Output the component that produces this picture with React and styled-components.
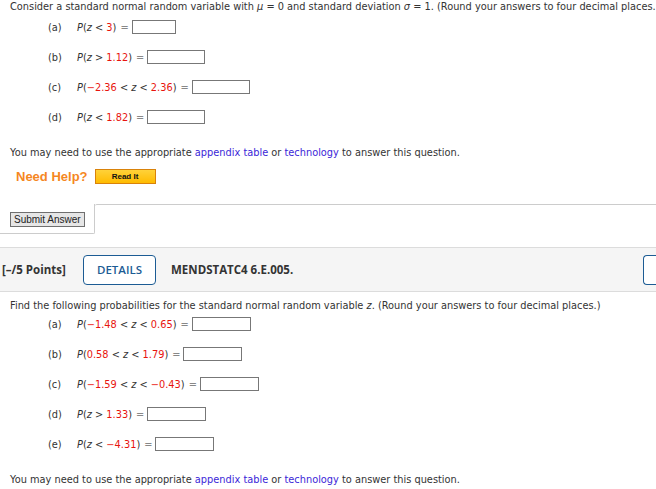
import React from "react";
import styled, { createGlobalStyle } from "styled-components";

const Global = createGlobalStyle`
  html, body { margin: 0; padding: 0; background: #fff; }
  body { font-family: Verdana, "DejaVu Sans", sans-serif; font-size: 9.8px; color: #333; overflow: hidden; }
`;

const Page = styled.div`
  width: 656px;
  height: 489px;
  overflow: hidden;
`;

const Question = styled.div`
  padding: 0 0 0 10px;
`;

const Intro = styled.p`
  margin: 0;
  padding-top: ${p => p.$top || 0}px;
  line-height: 14px;
  white-space: nowrap;
`;

const Parts = styled.div`
  display: flex;
  flex-direction: column;
  gap: 14px;
  padding: ${p => p.$top || 6}px 0 0 38px;
`;

const PartRow = styled.div`
  display: flex;
  align-items: center;
  height: 16px;
`;

const PartLabel = styled.span`
  width: 29px;
  flex: none;
`;

const Expr = styled.span`
  white-space: nowrap;
`;

const I = styled.i`
  font-style: italic;
`;

const Num = styled.span`
  color: #e8140e;
`;

const Eq = styled.span`
  color: #888;
  margin: 0 3px 0 4px;
`;

const AnswerBox = styled.span`
  display: inline-block;
  width: ${p => p.$w || 56}px;
  height: 12px;
  border: 1px solid #777;
  background: #fff;
`;

const Link = styled.a`
  color: #3b1fd8;
  text-decoration: none;
`;

const HelpRow = styled.div`
  display: flex;
  align-items: center;
  gap: 7px;
  padding: 9px 0 0 16px;
`;

const NeedHelp = styled.span`
  font-family: "Liberation Sans", Arial, sans-serif;
  font-weight: bold;
  font-size: 13px;
  color: #f5871f;
`;

const ReadIt = styled.button`
  width: 61px;
  height: 15px;
  padding: 0;
  border: 1px solid #d9820a;
  background: linear-gradient(#ffd23a, #ffbb00);
  font-family: "Liberation Sans", Arial, sans-serif;
  font-weight: bold;
  font-size: 8px;
  color: #111;
`;

const SubmitStrip = styled.div`
  display: flex;
  margin-top: 20px;
`;

const SubmitCell = styled.div`
  width: 95px;
  height: 30px;
  box-sizing: border-box;
  padding: 8px 0 0 10px;
  border-right: 1px solid #ccc;
  border-bottom: 1px solid #ccc;
  border-bottom-right-radius: 2px;
`;

const SubmitFiller = styled.div`
  flex: 1;
  border-top: 1px solid #ccc;
  border-top-left-radius: 2px;
`;

const SubmitBtn = styled.button`
  height: 15px;
  padding: 0 3px;
  border: 1px solid #6f6f6f;
  background: #e6e6e6;
  font-family: "Liberation Sans", Arial, sans-serif;
  font-size: 10px;
  color: #222;
  line-height: 13px;
`;

const Header = styled.div`
  display: flex;
  align-items: center;
  margin-top: 13px;
  height: 43px;
  background: #f5f5f5;
  border-top: 1px solid #dcdcdc;
  border-bottom: 1px solid #dcdcdc;
  font-family: "Open Sans", sans-serif;
  color: #333;
`;

const Points = styled.span`
  font-weight: 700;
  font-size: 11.5px;
  margin-left: 2px;
  width: 81px;
`;

const DetailsBtn = styled.button`
  width: 73px;
  height: 30px;
  border: 1px solid #1c5c94;
  border-radius: 4px;
  background: #fff;
  color: #1c5c94;
  font-family: "Open Sans", sans-serif;
  font-size: 11.5px;
  font-weight: 600;
  padding: 0;
`;

const Code = styled.span`
  font-weight: 700;
  font-size: 11.5px;
  margin-left: 15px;
  flex: 1;
`;

const EdgeBtn = styled.span`
  width: 20px;
  height: 28px;
  border: 1px solid #1c5c94;
  border-right: none;
  border-radius: 4px 0 0 4px;
  background: #fff;
  flex: none;
  margin-right: -8px;
`;

const Pz = ({ children }) => (
  <>
    <I>P</I>({children})
  </>
);

const Part = ({ label, expr, w }) => (
  <PartRow>
    <PartLabel>({label})</PartLabel>
    <Expr>{expr}</Expr>
    <Eq>=</Eq>
    <AnswerBox $w={w} />
  </PartRow>
);

const Lt = () => <> &lt; </>;
const Gt = () => <> &gt; </>;

export default function App() {
  return (
    <Page>
      <Global />
      <Question>
        <Intro $top={0}>
          Consider a standard normal random variable with <I>μ</I> = 0 and standard deviation <I>σ</I> = 1. (Round your answers to four decimal places.)
        </Intro>
        <Parts $top={5}>
          <Part label="a" w={42} expr={<Pz><I>z</I><Lt /><Num>3</Num></Pz>} />
          <Part label="b" w={56} expr={<Pz><I>z</I><Gt /><Num>1.12</Num></Pz>} />
          <Part label="c" w={56} expr={<Pz><Num>−2.36</Num><Lt /><I>z</I><Lt /><Num>2.36</Num></Pz>} />
          <Part label="d" w={56} expr={<Pz><I>z</I><Lt /><Num>1.82</Num></Pz>} />
        </Parts>
        <Intro $top={21}>
          You may need to use the appropriate <Link>appendix table</Link> or <Link>technology</Link> to answer this question.
        </Intro>
      </Question>
      <HelpRow>
        <NeedHelp>Need Help?</NeedHelp>
        <ReadIt>Read It</ReadIt>
      </HelpRow>
      <SubmitStrip>
        <SubmitCell>
          <SubmitBtn>Submit Answer</SubmitBtn>
        </SubmitCell>
        <SubmitFiller />
      </SubmitStrip>
      <Header>
        <Points>[–/5 Points]</Points>
        <DetailsBtn>DETAILS</DetailsBtn>
        <Code>MENDSTATC4 6.E.005.</Code>
        <EdgeBtn />
      </Header>
      <Question>
        <Intro $top={7}>
          Find the following probabilities for the standard normal random variable <I>z</I>. (Round your answers to four decimal places.)
        </Intro>
        <Parts $top={3}>
          <Part label="a" w={57} expr={<Pz><Num>−1.48</Num><Lt /><I>z</I><Lt /><Num>0.65</Num></Pz>} />
          <Part label="b" w={57} expr={<Pz><Num>0.58</Num><Lt /><I>z</I><Lt /><Num>1.79</Num></Pz>} />
          <Part label="c" w={57} expr={<Pz><Num>−1.59</Num><Lt /><I>z</I><Lt /><Num>−0.43</Num></Pz>} />
          <Part label="d" w={57} expr={<Pz><I>z</I><Gt /><Num>1.33</Num></Pz>} />
          <Part label="e" w={57} expr={<Pz><I>z</I><Lt /><Num>−4.31</Num></Pz>} />
        </Parts>
        <Intro $top={21}>
          You may need to use the appropriate <Link>appendix table</Link> or <Link>technology</Link> to answer this question.
        </Intro>
      </Question>
    </Page>
  );
}
